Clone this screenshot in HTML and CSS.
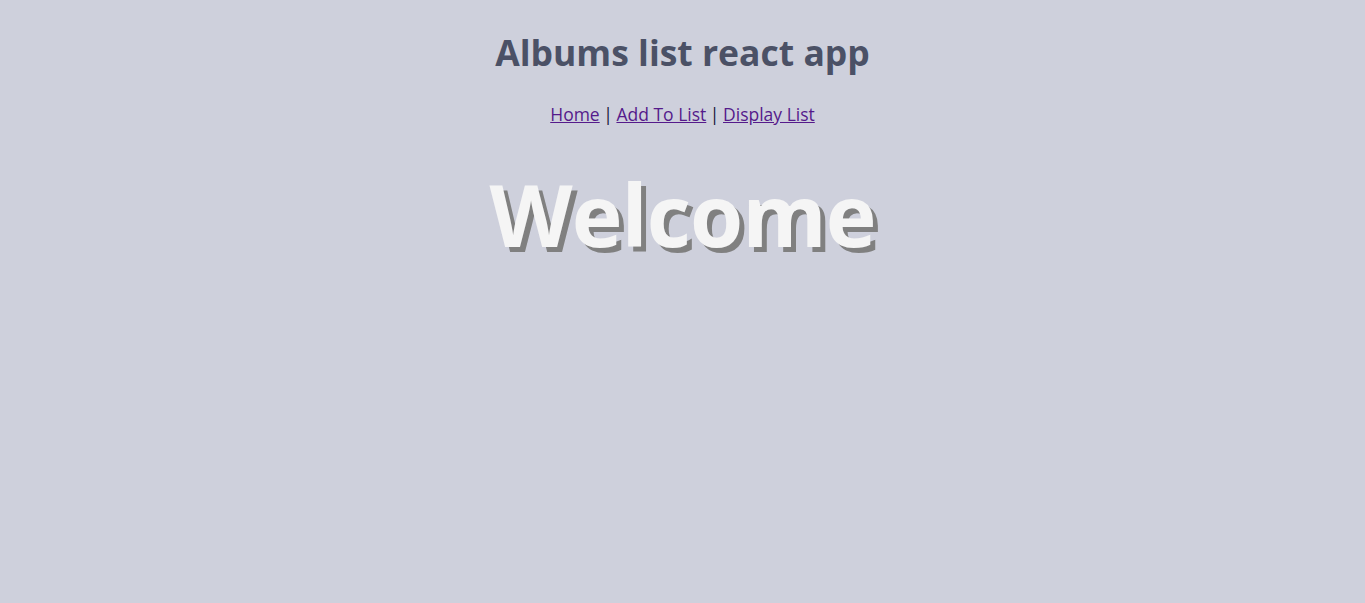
FILE: index.html
```html
<!DOCTYPE html>
<html lang="en">
<head>
    <meta charset="UTF-8">
    <title>Albums list react app</title>
    <link rel="stylesheet" href="styles.css">
</head>
<body>
<div class="app">
    <h1 class="title">Albums list react app</h1>
    <nav class="nav">
        <a href="#">Home</a> | <a href="#">Add To List</a> | <a href="#">Display List</a>
    </nav>
    <div class="welcome">Welcome</div>
</div>
</body>
</html>
```

FILE: styles.css
```css
*{
    margin: 0;
    padding: 0;
}
html, body{
    height: 100%;
}
body{
    background-color: #ced0dc;
    font-family: "Open Sans", "Noto Sans", sans-serif;
    color: #14143a;
}
.app{
    display: flex;
    flex-direction: column;
    align-items: center;
    padding-top: 28px;
}
.title{
    font-size: 35.5px;
    line-height: 48px;
    font-weight: 700;
    color: #4b5166;
}
.nav{
    margin-top: 26px;
    font-size: 17.5px;
    line-height: 24px;
    word-spacing: -1px;
}
.nav a{
    color: #551a8b;
    word-spacing: 0;
}
.welcome{
    margin-top: 38px;
    font-size: 86px;
    line-height: 100px;
    font-weight: 700;
    letter-spacing: -1px;
    color: #f5f5f5;
    text-shadow: 5px 5px 0 #808080;
}
```
